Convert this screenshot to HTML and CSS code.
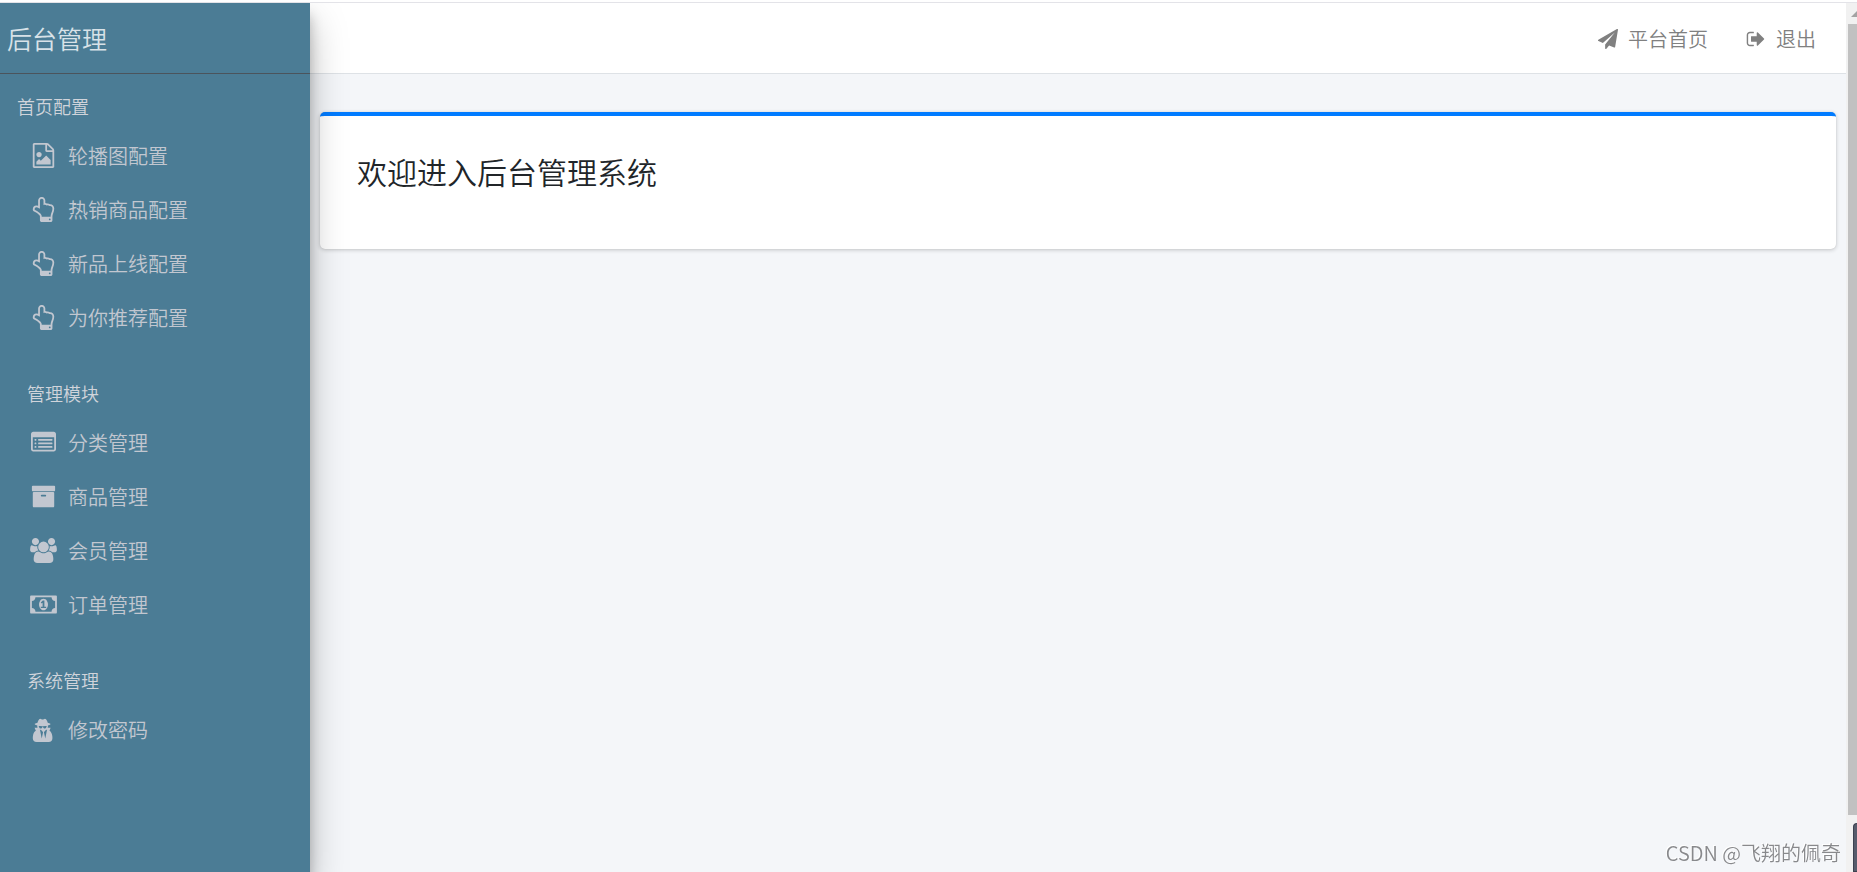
FILE: index.html
```html
<!DOCTYPE html>
<html lang="zh-CN">
<head>
<meta charset="utf-8">
<title>后台管理</title>
<link rel="stylesheet" href="styles.css">
</head>
<body>
<svg class="sprite" aria-hidden="true">
  <symbol id="file-image" viewBox="-64 0 1920 1792"><path d="M1596 380q28 28 48 76t20 88v1152q0 40-28 68t-68 28h-1344q-40 0-68-28t-28-68v-1600q0-40 28-68t68-28h896q40 0 88 20t76 48zm-444-244v376h376q-10-29-22-41l-313-313q-12-12-41-22zm384 1528v-1024h-416q-40 0-68-28t-28-68v-416h-768v1536h1280zm-128-448v320h-1024v-192l192-192 128 128 384-384zm-832-192q-80 0-136-56t-56-136 56-136 136-56 136 56 56 136-56 136-136 56z"/></symbol>
  <symbol id="hand-up" viewBox="-64 0 1920 1792"><path d="M1408 1600q0-26-19-45t-45-19-45 19-19 45 19 45 45 19 45-19 19-45zm128-764q0-189-167-189-26 0-56 5-16-30-52.500-47.500t-73.500-17.500-69 18q-50-53-119-53-25 0-55.500 10t-47.500 25v-331q0-52-38-90t-90-38q-51 0-89.500 39t-38.500 89v576q-20 0-48.500-15t-55-33-68-33-84.500-15q-67 0-97.500 44.500t-30.500 115.500q0 24 139 90 44 24 65 37 64 40 145 112 81 71 106 101 57 69 57 140v32h640v-32q0-72 32-167t64-193.500 32-179.500zm128-5q0 133-69 322-59 164-59 223v288q0 53-37.500 90.500t-90.500 37.500h-640q-53 0-90.500-37.500t-37.500-90.500v-288q0-10-4.500-21.500t-14-23.500-18-22.500-22.500-24-21.500-20.500-21.500-19-17-14q-74-65-129-100-21-13-62-33t-72-37-63-40.500-49.500-55-17.500-69.500q0-125 67-206.500t189-81.500q68 0 128 22v-374q0-104 77-181t179-77q105 0 181 75.500t76 180.500v169q62 4 119 37 21-3 43-3 101 0 178 60 139-1 219.500 85t80.500 227z"/></symbol>
  <symbol id="list-alt" viewBox="-64 0 1920 1792"><path d="M384 1184v64q0 13-9.500 22.500t-22.500 9.500h-64q-13 0-22.500-9.500t-9.500-22.500v-64q0-13 9.500-22.500t22.500-9.500h64q13 0 22.500 9.500t9.500 22.500zm0-256v64q0 13-9.500 22.500t-22.500 9.500h-64q-13 0-22.500-9.500t-9.500-22.500v-64q0-13 9.500-22.500t22.500-9.500h64q13 0 22.500 9.500t9.500 22.500zm0-256v64q0 13-9.500 22.500t-22.500 9.500h-64q-13 0-22.500-9.500t-9.500-22.500v-64q0-13 9.500-22.500t22.500-9.500h64q13 0 22.500 9.500t9.500 22.500zm1152 512v64q0 13-9.500 22.500t-22.500 9.500h-960q-13 0-22.500-9.500t-9.500-22.500v-64q0-13 9.500-22.500t22.500-9.500h960q13 0 22.500 9.500t9.500 22.500zm0-256v64q0 13-9.500 22.500t-22.500 9.500h-960q-13 0-22.500-9.500t-9.500-22.500v-64q0-13 9.500-22.500t22.500-9.500h960q13 0 22.500 9.500t9.500 22.500zm0-256v64q0 13-9.500 22.500t-22.500 9.500h-960q-13 0-22.500-9.500t-9.500-22.500v-64q0-13 9.500-22.500t22.500-9.500h960q13 0 22.500 9.500t9.500 22.500zm128 704v-832q0-13-9.500-22.500t-22.500-9.500h-1472q-13 0-22.500 9.500t-9.500 22.500v832q0 13 9.500 22.500t22.500 9.500h1472q13 0 22.500-9.500t9.500-22.500zm128-1088v1088q0 66-47 113t-113 47h-1472q-66 0-113-47t-47-113v-1088q0-66 47-113t113-47h1472q66 0 113 47t47 113z"/></symbol>
  <symbol id="archive" viewBox="-64 0 1920 1792"><path d="M1088 832q0-26-19-45t-45-19h-256q-26 0-45 19t-19 45 19 45 45 19h256q26 0 45-19t19-45zm576-192v960q0 26-19 45t-45 19h-1408q-26 0-45-19t-19-45v-960q0-26 19-45t45-19h1408q26 0 45 19t19 45zm64-448v256q0 26-19 45t-45 19h-1536q-26 0-45-19t-19-45v-256q0-26 19-45t45-19h1536q26 0 45 19t19 45z"/></symbol>
  <symbol id="users" viewBox="-64 0 1920 1792"><path d="M529 896q-162 5-265 128h-134q-82 0-138-40.500t-56-118.500q0-353 124-353 6 0 43.500 21t97.500 42.500 119 21.500q67 0 133-23-5 37-5 66 0 139 81 256zm1071 637q0 120-73 189.500t-194 69.500h-874q-121 0-194-69.500t-73-189.500q0-53 3.500-103.500t14-109 26.500-108.500 43-97.500 62-81 85.500-53.500 111.500-20q10 0 43 21.500t73 48 107 48 135 21.500 135-21.500 107-48 73-48 43-21.500q61 0 111.500 20t85.500 53.500 62 81 43 97.500 26.500 108.500 14 109 3.500 103.500zm-1024-1277q0 106-75 181t-181 75-181-75-75-181 75-181 181-75 181 75 75 181zm704 384q0 159-112.500 271.500t-271.500 112.500-271.500-112.500-112.500-271.500 112.500-271.500 271.500-112.500 271.500 112.500 112.500 271.500zm576 225q0 78-56 118.500t-138 40.500h-134q-103-123-265-128 81-117 81-256 0-29-5-66 66 23 133 23 59 0 119-21.500t97.500-42.500 43.500-21q124 0 124 353zm-128-609q0 106-75 181t-181 75-181-75-75-181 75-181 181-75 181 75 75 181z"/></symbol>
  <symbol id="money" viewBox="0 0 1920 1792"><path d="M768 1152h384v-96h-128v-448h-114l-148 137 77 80q42-37 55-57h2v288h-128v96zm512-256q0 70-21 142t-59.500 134-101.500 101-138 39-138-39-101.500-101-59.500-134-21-142 21-142 59.500-134 101.500-101 138-39 138 39 101.500 101 59.500 134 21 142zm512 256v-512q-106 0-181-75t-75-181h-1152q0 106-75 181t-181 75v512q106 0 181 75t75 181h1152q0-106 75-181t181-75zm128-832v1152q0 26-19 45t-45 19h-1792q-26 0-45-19t-19-45v-1152q0-26 19-45t45-19h1792q26 0 45 19t19 45z"/></symbol>
  <symbol id="user-secret" viewBox="0 0 1920 1792"><path d="M832 1536l96-448-96-128-128-64zm256 0l128-640-128 64-96 128zm104-885q-2-4-4-6-10-8-96-8-70 0-167 19-7 2-21 2t-21-2q-97-19-167-19-86 0-96 8-2 2-4 6 2 18 4 27 2 3 7.500 6.500t7.500 10.500q2 4 7.500 20.500t7 20.500 7.500 17 8.500 17 9 14 12 13.500 14 9.500 17.500 8 20.500 4 24.500 2q36 0 59-12.500t32.500-30 14.500-34.500 11.500-29.500 17.500-12.500h12q11 0 17.500 12.500t11.500 29.500 14.500 34.500 32.500 30 59 12.500q13 0 24.500-2t20.500-4 17.500-8 14-9.500 12-13.500 9-14 8.500-17 7.500-17 7-20.500 7.500-20.500q2-7 7.500-10.500t7.500-6.500q2-9 4-27zm408 879q0 121-73 190t-194 69h-874q-121 0-194-69t-73-190q0-61 4.500-118t19-125.500 37.500-123.500 63.500-103.500 93.500-74.500l-90-220h214q-22-64-22-128 0-12 2-32-194-40-194-96 0-57 210-99 17-62 51.500-134t70.500-114q32-37 76-37 30 0 84 31t84 31 84-31 84-31q44 0 76 37 36 42 70.500 114t51.500 134q210 42 210 99 0 56-194 96 7 81-20 160h214l-82 225q63 33 107.500 96.500t65.500 143.500 29 151.500 8 148.500z"/></symbol>
  <symbol id="paper-plane" viewBox="0 0 1792 1792"><path d="M1764 11q33 24 27 64l-256 1536q-5 29-32 45-14 8-31 8-11 0-24-5l-453-185-242 295q-18 23-49 23-13 0-22-4-19-7-30.500-23.500t-11.500-36.500v-349l864-1059-1069 925-395-162q-37-14-40-55-2-40 32-59l1664-960q15-9 32-9 20 0 36 11z"/></symbol>
  <symbol id="sign-out" viewBox="0 0 1792 1792"><path d="M704 1440q0 4 1 20t.5 26.500-3 23.500-10 19.500-20.500 6.500h-320q-119 0-203.500-84.500t-84.500-203.500v-704q0-119 84.500-203.500t203.500-84.500h320q13 0 22.500 9.500t9.500 22.500q0 4 1 20t.5 26.500-3 23.500-10 19.500-20.500 6.500h-320q-66 0-113 47t-47 113v704q0 66 47 113t113 47h312l11.500 1 11.500 3 8 5.500 7 9 2 13.500zm928-544q0 26-19 45l-544 544q-19 19-45 19t-45-19-19-45v-288h-448q-26 0-45-19t-19-45v-384q0-26 19-45t45-19h448v-288q0-26 19-45t45-19 45 19l544 544q19 19 19 45z"/></symbol>
</svg>

<div class="app">
  <aside class="sidebar">
    <a class="brand" href="#">后台管理</a>
    <nav class="menu">
      <section class="group">
        <h2 class="group-title group-title-first">首页配置</h2>
        <a class="item" href="#"><svg class="icon"><use href="#file-image"/></svg>轮播图配置</a>
        <a class="item" href="#"><svg class="icon"><use href="#hand-up"/></svg>热销商品配置</a>
        <a class="item" href="#"><svg class="icon"><use href="#hand-up"/></svg>新品上线配置</a>
        <a class="item" href="#"><svg class="icon"><use href="#hand-up"/></svg>为你推荐配置</a>
      </section>
      <section class="group">
        <h2 class="group-title">管理模块</h2>
        <a class="item" href="#"><svg class="icon"><use href="#list-alt"/></svg>分类管理</a>
        <a class="item" href="#"><svg class="icon"><use href="#archive"/></svg>商品管理</a>
        <a class="item" href="#"><svg class="icon"><use href="#users"/></svg>会员管理</a>
        <a class="item" href="#"><svg class="icon"><use href="#money"/></svg>订单管理</a>
      </section>
      <section class="group">
        <h2 class="group-title">系统管理</h2>
        <a class="item" href="#"><svg class="icon"><use href="#user-secret"/></svg>修改密码</a>
      </section>
    </nav>
  </aside>

  <div class="page">
    <header class="topbar">
      <a class="toplink" href="#"><svg class="topicon"><use href="#paper-plane"/></svg>平台首页</a>
      <a class="toplink" href="#"><svg class="topicon"><use href="#sign-out"/></svg>退出</a>
    </header>
    <main class="content">
      <div class="card">
        <h1 class="welcome">欢迎进入后台管理系统</h1>
      </div>
    </main>
  </div>

  <div class="scroll" aria-hidden="true">
    <svg class="scroll-arrow" viewBox="0 0 9 21"><path d="M3 14 9 8V14z"/></svg>
    <div class="scroll-thumb"></div>
    <div class="scroll-end"><div class="float-tab"></div></div>
  </div>
</div>
<div class="watermark">CSDN @飞翔的佩奇</div>
</body>
</html>
```

FILE: styles.css
```css
* {
  box-sizing: border-box;
}

body {
  margin: 0;
  padding-top: 2px;
  background: #fff;
  color: #212529;
  font-family: "Noto Sans CJK SC", "Noto Sans", sans-serif;
  font-weight: 350;
  font-size: 20px;
  line-height: 30px;
}

a {
  color: inherit;
  text-decoration: none;
}

.sprite {
  position: absolute;
  width: 0;
  height: 0;
}

.app {
  display: flex;
  min-height: calc(100vh - 2px);
  border-top: 1px solid #e3e3e8;
  background: #f4f6f9;
}

.sidebar {
  z-index: 1;
  flex: none;
  width: 310px;
  background: #4b7c95;
  color: #c2c7d0;
  box-shadow: 0 18px 35px rgba(0, 0, 0, 0.25), 0 12px 12px rgba(0, 0, 0, 0.22);
  clip-path: inset(0 -60px 0 0);
}

.brand {
  display: flex;
  align-items: center;
  height: 71px;
  padding-left: 7px;
  border-bottom: 1px solid #4b545c;
  color: #d8e2e8;
  font-size: 25px;
}

.menu {
  padding-top: 13px;
}

.group {
  display: flex;
  flex-direction: column;
  gap: 4px;
  padding: 0 10px 31px;
}

.group-title {
  margin: 0;
  padding: 4px 17px 6px;
  color: #d0d4db;
  font-size: 18px;
  font-weight: 350;
  line-height: 30px;
}

.group-title-first {
  padding-left: 7px;
}

.item {
  display: flex;
  align-items: center;
  gap: 11px;
  height: 50px;
  padding: 0 20px;
}

.icon {
  width: 27px;
  height: 25px;
  margin-bottom: 2px;
  fill: currentColor;
}

.page {
  flex: 1;
  min-width: 0;
}

.topbar {
  display: flex;
  align-items: center;
  justify-content: flex-end;
  gap: 38px;
  height: 71px;
  padding: 2px 30px 0 0;
  border-bottom: 1px solid #dee2e6;
  background: #fff;
  color: #808080;
}

.toplink {
  display: flex;
  align-items: center;
  gap: 10px;
}

.topicon {
  width: 20px;
  height: 20px;
  fill: currentColor;
}

.content {
  padding: 38px 10px;
}

.card {
  padding: 34px 37px 57px;
  border-top: 4px solid #007bff;
  border-radius: 5px;
  background: #fff;
  box-shadow: 0 0 1px rgba(0, 0, 0, 0.13), 0 1px 4px rgba(0, 0, 0, 0.2);
}

.welcome {
  margin: 0;
  font-size: 30px;
  font-weight: 350;
  line-height: 42px;
}

.scroll {
  display: flex;
  flex: none;
  flex-direction: column;
  width: 11px;
  padding-left: 2px;
  background: #f1f1f1;
}

.scroll-arrow {
  width: 9px;
  height: 21px;
  fill: #a3a3a3;
}

.scroll-thumb {
  flex: 1;
  background: #c1c1c1;
}

.scroll-end {
  height: 57px;
  padding: 8px 0 0 5px;
}

.float-tab {
  height: 100%;
  border: 1px solid #3c4250;
  border-right: 0;
  border-radius: 4px 0 0 0;
  background: #565c6c;
}

.watermark {
  position: fixed;
  right: 16px;
  bottom: 4px;
  color: #88898c;
  font-size: 20px;
  text-shadow: -1px -1px 0 #fff;
}
```
